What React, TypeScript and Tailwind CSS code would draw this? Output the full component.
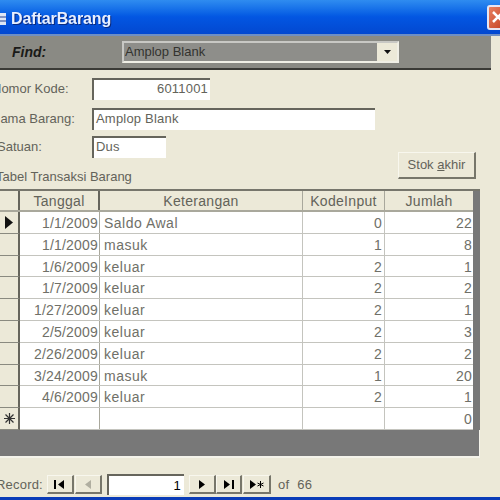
const rows = [
  ["1/1/2009", "Saldo Awal", "0", "22"],
  ["1/1/2009", "masuk", "1", "8"],
  ["1/6/2009", "keluar", "2", "1"],
  ["1/7/2009", "keluar", "2", "2"],
  ["1/27/2009", "keluar", "2", "1"],
  ["2/5/2009", "keluar", "2", "3"],
  ["2/26/2009", "keluar", "2", "2"],
  ["3/24/2009", "masuk", "1", "20"],
  ["4/6/2009", "keluar", "2", "1"],
  ["", "", "", "0"],
];

const raised = "border-t border-l border-t-[#f8f7ee] border-l-[#f8f7ee] border-b-2 border-r-2 border-b-[#77766a] border-r-[#77766a]";
const sunken = "border-t-2 border-l-2 border-t-[#66655c] border-l-[#66655c] bg-white";

function Field({ label, value, width, right, labelClass, className = "" }: { label: string; value: string; width: string; right?: boolean; labelClass: string; className?: string }) {
  return (
    <div className={`flex items-center h-[22px] ${className}`}>
      <span className={`w-[92px] shrink-0 whitespace-nowrap text-[13px] text-[#63635a] ${labelClass}`}>{label}</span>
      <div className={`${width} ${sunken} h-[22px] px-[2px] text-[13px] tracking-[0.2px] leading-[18px] text-[#63635a] ${right ? "text-right" : ""}`}>
        {value}
      </div>
    </div>
  );
}

function NavButton({ children, color = "text-black", width = "w-[27px]" }: { children: React.ReactNode; color?: string; width?: string }) {
  return (
    <div className={`${width} h-[19px] ${raised} flex items-center justify-center ${color}`}>
      <svg width="16" height="11" viewBox="0 0 16 11" fill="currentColor">{children}</svg>
    </div>
  );
}

export default function App() {
  return (
    <div className="w-[500px] h-[500px] overflow-hidden bg-[#ece9d8] flex flex-col font-['Liberation_Sans',sans-serif]">
      {/* title bar */}
      <div className="h-[36px] shrink-0 border-b-2 border-b-[#6f8fc4] bg-gradient-to-b from-[#2f8cf0] via-[#0356e2] to-[#0348d0] flex items-center pt-[4px]">
        <svg width="7" height="14" viewBox="0 0 7 14" className="shrink-0">
          <rect x="-4" y="1" width="10" height="12" fill="#dfe7f5" />
          <path d="M0 5H6M0 9H6" stroke="#24408f" strokeWidth="1" />
        </svg>
        <span className="ml-[4px] text-[16px] font-bold text-[#e8f0ff] tracking-[-0.1px] drop-shadow-[1px_1px_0_#0a2a80]">DaftarBarang</span>
        <div className="ml-auto -mr-[8px] -mt-[4px] w-[21px] h-[25px] rounded-[3px] border-2 border-[#e8e4f0] bg-gradient-to-br from-[#e88060] to-[#c23c1e] flex items-center justify-center text-white shrink-0">
          <svg width="14" height="14" viewBox="0 0 14 14" stroke="currentColor" strokeWidth="2.5"><path d="M2 2L12 12M12 2L2 12" /></svg>
        </div>
      </div>

      {/* find band */}
      <div className="h-[34px] w-[491px] shrink-0 bg-[#8a8a84] border-b-2 border-b-[#3a3a36] flex items-center">
        <span className="ml-[12px] w-[110px] text-[14px] italic font-bold text-[#1a1a18]">Find:</span>
        <div className="w-[277px] h-[22px] bg-[#8e8e8a] border-t-2 border-l-2 border-t-[#c8c8c4] border-l-[#c8c8c4] border-b-2 border-r-2 border-b-[#f0efe6] border-r-[#f0efe6] flex items-center justify-between">
          <span className="text-[13px] text-[#33332f] ml-[1px]">Amplop Blank</span>
          <div className="w-[20px] h-[18px] bg-[#ece9d8] flex items-center justify-center">
            <svg width="7" height="4" viewBox="0 0 7 4"><path d="M0 0H7L3.5 4Z" fill="#111" /></svg>
          </div>
        </div>
      </div>

      {/* fields */}
      <div className="flex flex-col pt-[8px] h-[119px] shrink-0">
        <Field label="Nomor Kode:" value="6011001" width="w-[118px]" right labelClass="-ml-[8px] mr-[8px]" />
        <Field label="Nama Barang:" value="Amplop Blank" width="w-[283px]" labelClass="-ml-[9px] mr-[9px]" className="mt-[8px]" />
        <Field label="Satuan:" value="Dus" width="w-[74px]" labelClass="-ml-[3px] mr-[3px]" className="mt-[6px]" />
        <div className="flex items-end justify-between w-[476px] -mt-[6px]">
          <span className="-ml-[4px] -mb-[6px] text-[13px] leading-[16px] text-[#63635a]">Tabel Transaksi Barang</span>
          <div className={`w-[78px] h-[27px] ${raised} flex items-center justify-center text-[13px] text-[#63635a]`}>
            Stok&nbsp;<span className="underline">a</span>khir
          </div>
        </div>
      </div>

      {/* datasheet */}
      <div className="w-[480px] h-[241px] shrink-0 border-t-2 border-t-[#77766c] bg-white flex">
        <div className="w-[473px] flex flex-col">
          <div className="h-[21px] flex text-[14px] tracking-[0.3px] text-[#63635a] bg-[#ece9d8] border-b-2 border-b-[#a9a89c]">
            <div className="w-[20px] border-r-2 border-r-[#66655c]" />
            <div className="w-[80px] border-r-2 border-r-[#66655c] text-center leading-[20px]">Tanggal</div>
            <div className="w-[203px] border-r border-r-[#a9a89c] text-center leading-[20px]">Keterangan</div>
            <div className="w-[82px] border-r border-r-[#a9a89c] text-center leading-[20px]">KodeInput</div>
            <div className="flex-1 text-center leading-[20px]">Jumlah</div>
          </div>
          {rows.map((row, i) => (
            <div key={i} className="h-[21.8px] flex text-[14px] tracking-[0.2px] leading-[22px] text-[#707068] border-b border-b-[#c4c4be]">
              <div className="w-[20px] bg-[#ece9d8] border-r-2 border-r-[#66655c] border-b border-b-[#8a8a80] -mb-[1px] flex items-center justify-center text-black">
                {i === 0 && <svg width="8" height="13" viewBox="0 0 8 13"><path d="M0 0L8 6.5L0 13Z" fill="#111" /></svg>}
                {i === 9 && (
                  <svg width="11" height="11" viewBox="0 0 11 11" stroke="#333" strokeWidth="1.2">
                    <path d="M5.5 0V11M0 5.5H11M1.5 1.5L9.5 9.5M9.5 1.5L1.5 9.5" />
                  </svg>
                )}
              </div>
              <div className="w-[80px] border-r border-r-[#a9a89c] text-right pr-[1px]">{row[0]}</div>
              <div className="w-[203px] border-r border-r-[#c4c4be] pl-[4px] tracking-[0.5px]">{row[1]}</div>
              <div className="w-[82px] border-r border-r-[#c4c4be] text-right pr-[2px]">{row[2]}</div>
              <div className="flex-1 text-right pr-[1px]">{row[3]}</div>
            </div>
          ))}
        </div>
        <div className="flex-1 bg-[#787878]" />
      </div>

      {/* gray gap */}
      <div className="w-[480px] h-[28px] shrink-0 bg-[#787878] border-b-2 border-b-[#f4f3ea] border-r border-r-[#f4f3ea]" />

      {/* navigation */}
      <div className="flex-1 flex items-center text-[13px] text-[#63635a] pt-[14px] tracking-[0.2px]">
        <span className="-ml-[4px] w-[51px] shrink-0">Record:</span>
        <NavButton><rect x="2" y="1" width="2" height="9" /><path d="M12 1V10L6 5.5Z" /></NavButton>
        <div className="w-[1px]" />
        <NavButton color="text-[#b0aea0]"><path d="M11 1V10L5 5.5Z" /></NavButton>
        <div className={`ml-[5px] w-[77px] h-[21px] ${sunken} text-right pr-[3px] leading-[19px] text-black`}>1</div>
        <div className="w-[5px]" />
        <NavButton><path d="M5 1V10L11 5.5Z" /></NavButton>
        <NavButton width="w-[26px]"><path d="M3 1V10L9 5.5Z" /><rect x="11" y="1" width="2" height="9" /></NavButton>
        <div className="w-[1px]" />
        <NavButton width="w-[28px]"><path d="M1 1V10L7 5.5Z" /><path d="M11.5 2V9M8.5 4L14.5 7M14.5 4L8.5 7" stroke="currentColor" fill="none" /></NavButton>
        <span className="ml-[7px]">of</span>
        <span className="ml-[8px]">66</span>
      </div>
      <div className="h-[3px] shrink-0 bg-[#0a3cb8]" />
    </div>
  );
}
